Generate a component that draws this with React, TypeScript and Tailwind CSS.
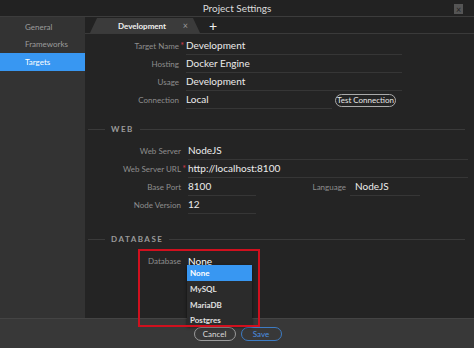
import React from "react";

const font = { fontFamily: 'Lato, "Open Sans", sans-serif' };

function Row({
  label,
  value,
  req,
  w = "w-[216px]",
  labelW = "w-[94px]",
  extra,
}: {
  label: string;
  value: string;
  req?: boolean;
  w?: string;
  labelW?: string;
  extra?: React.ReactNode;
}) {
  return (
    <div className="flex h-[18px] items-stretch">
      <div className={`${labelW} relative flex items-center justify-end whitespace-nowrap text-[8px] text-[#8e8e8e]`}>
        {label}
        {req && <span className="absolute right-[-5px] top-[2px] text-[9px] text-[#d23a4a]">*</span>}
      </div>
      <div className={`ml-[7px] ${w} flex items-center whitespace-nowrap border-b border-[#363636] text-[10px] text-[#ececec]`}>{value}</div>
      {extra}
    </div>
  );
}

function Section({ title }: { title: string }) {
  return (
    <div className="flex h-[18px] items-center pl-[3px] pr-[9px]">
      <div className="h-px w-[17px] bg-[#3a3a3a]" />
      <div className="px-[6px] text-[8px] font-bold tracking-[1.5px] text-[#9a9a9a]">{title}</div>
      <div className="h-px flex-1 bg-[#3a3a3a]" />
    </div>
  );
}

export default function App() {
  return (
    <div className="relative h-[348px] w-[474px] overflow-hidden bg-[#232323]" style={font}>
      {/* Title bar */}
      <div className="relative flex h-[17px] items-center justify-center border-b border-[#3c3c3c] bg-[#222222]">
        <span className="text-[10px] text-[#dcdcdc]">Project Settings</span>
        <div className="absolute right-[11px] top-[4px] flex h-[10px] w-[9px] items-center justify-center bg-[#555] text-[9px] leading-none text-[#222]">
          ×
        </div>
      </div>

      <div className="flex h-[301px]">
        {/* Sidebar */}
        <div className="w-[85px] bg-[#333333] pt-[1px] text-[8px]">
          <div className="flex h-[17px] items-center pl-[25px] text-[#9c9c9c]">General</div>
          <div className="flex h-[18px] items-center pl-[25px] text-[#9c9c9c]">Frameworks</div>
          <div className="flex h-[18px] items-center bg-[#3897f2] pl-[25px] text-white">Targets</div>
        </div>

        {/* Main */}
        <div className="flex flex-1 flex-col bg-[#242424]">
          {/* Tab bar */}
          <div className="flex h-[17px] items-end border-b border-[#3a3a3a] bg-[#222222] pl-[5px]">
            <div className="relative flex h-[15px] w-[110px] items-center justify-center">
              <svg className="absolute inset-0" width="110" height="15" viewBox="0 0 110 15">
                <path d="M0 15 L7 0 L103 0 L110 15 Z" fill="#3b3b3b" />
              </svg>
              <span className="relative -ml-[6px] text-[8px] font-bold text-[#f0f0f0]">Development</span>
              <span className="absolute right-[12px] top-[1px] text-[9px] text-[#9a9a9a]">×</span>
            </div>
            <div className="ml-[9px] flex h-[15px] items-center text-[14px] leading-none text-[#eeeeee]">+</div>
          </div>

          {/* Content */}
          <div className="flex-1 pt-[3px]">
            <Row label="Target Name" value="Development" req />
            <Row label="Hosting" value="Docker Engine" />
            <Row label="Usage" value="Development" />
            <Row
              label="Connection"
              value="Local"
              w="w-[146px]"
              extra={
                <div className="ml-[3px] flex items-center">
                  <div className="flex h-[13px] w-[61px] items-center justify-center whitespace-nowrap rounded-full border border-[#aaaaaa] text-[8px] text-[#e6e6e6]">
                    Test Connection
                  </div>
                </div>
              }
            />

            <div className="h-[11px]" />
            <Section title="WEB" />
            <div className="h-[4px]" />
            <div className="pl-[2px]">
              <Row label="Web Server" value="NodeJS" w="w-[280px]" />
              <Row label="Web Server URL" value="http://localhost:8100" req w="w-[280px]" />
              <Row
                label="Base Port"
                value="8100"
                w="w-[68px]"
                extra={
                  <div className="flex">
                    <div className="flex w-[90px] items-center justify-end text-[8px] text-[#8e8e8e]">Language</div>
                    <div className="ml-[4px] flex w-[70px] items-center border-b border-[#363636] pl-[5px] text-[10px] text-[#ececec]">
                      NodeJS
                    </div>
                  </div>
                }
              />
              <Row label="Node Version" value="12" w="w-[68px]" />
            </div>

            <div className="h-[16px]" />
            <Section title="DATABASE" />
            <div className="h-[4px]" />
            <div className="pl-[2px]">
              <div className="flex h-[18px] items-center">
                <div className="w-[94px] text-right text-[8px] text-[#8e8e8e]">Database</div>
                <div className="ml-[7px] text-[10px] text-[#ffffff]">None</div>
              </div>
            </div>
          </div>
        </div>
      </div>

      {/* Footer */}
      <div className="flex h-[30px] items-start justify-center gap-[5px] border-t border-[#444] bg-[#383838] pt-[8px] pl-[1px]">
        <div className="flex h-[14px] w-[42px] items-center justify-center rounded-full border border-[#9a9a9a] text-[8px] text-[#dcdcdc]">
          Cancel
        </div>
        <div className="flex h-[14px] w-[41px] items-center justify-center rounded-full border border-[#3d7cc4] text-[8px] text-[#4a90e2]">
          Save
        </div>
      </div>

      {/* Dropdown */}
      <div className="absolute left-[187px] top-[265px] w-[65px] bg-[#2b2b2b] text-[8px] font-bold text-[#e0e0e0] shadow-[0_1px_3px_rgba(0,0,0,0.6)]">
        <div className="flex h-[16px] items-center bg-[#3897f2] pl-[3px] text-white">None</div>
        <div className="flex h-[16px] items-center pl-[3px]">MySQL</div>
        <div className="flex h-[16px] items-center pl-[3px]">MariaDB</div>
        <div className="flex h-[13px] items-center pl-[3px]">Postgres</div>
      </div>

      {/* Red highlight box */}
      <div className="absolute left-[138px] top-[249px] h-[78px] w-[122px] border-2 border-[#d0101e]" />
    </div>
  );
}
